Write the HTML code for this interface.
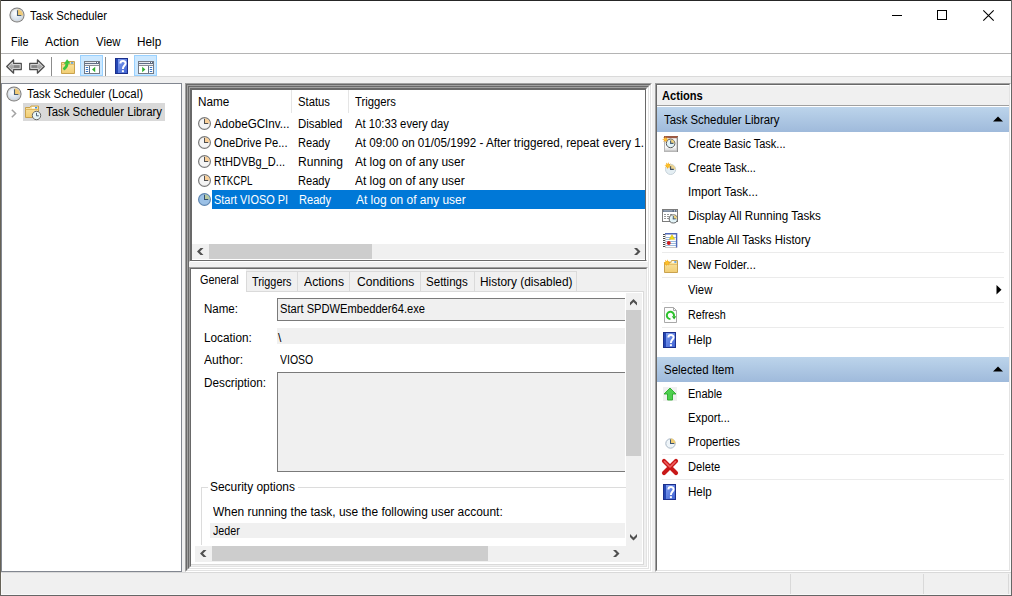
<!DOCTYPE html>
<html><head><meta charset="utf-8">
<style>
*{box-sizing:border-box;margin:0;padding:0}
html,body{width:1012px;height:596px;overflow:hidden;background:#fff}
body{position:relative;font-family:"Liberation Sans",sans-serif;font-size:12px;color:#000;line-height:14px}
.a{position:absolute}
.t{position:absolute;white-space:nowrap;line-height:14px;transform-origin:0 0}
.sk{border-style:solid;border-width:1px;border-color:#a0a0a0 #fff #fff #a0a0a0}
.sk2{border-style:solid;border-width:1px;border-color:#696969 #e3e3e3 #e3e3e3 #696969}
svg{position:absolute;overflow:visible}
</style></head><body>
<svg width="0" height="0" style="position:absolute">
<defs>
 <radialGradient id="face" cx="40%" cy="35%" r="70%"><stop offset="0" stop-color="#ffffff"/><stop offset="1" stop-color="#c9d8e8"/></radialGradient>
 <linearGradient id="hdr" x1="0" y1="0" x2="0" y2="1"><stop offset="0" stop-color="#bcd3ea"/><stop offset="1" stop-color="#9fbadb"/></linearGradient>
 <linearGradient id="fold" x1="0" y1="0" x2="0" y2="1"><stop offset="0" stop-color="#fbe6a6"/><stop offset="1" stop-color="#f1cd72"/></linearGradient>
 <linearGradient id="arrowg" x1="0" y1="0" x2="0" y2="1"><stop offset="0" stop-color="#c8c8c8"/><stop offset="1" stop-color="#8a8a8a"/></linearGradient>
 <linearGradient id="helpg" x1="0" y1="0" x2="1" y2="1"><stop offset="0" stop-color="#86a4f2"/><stop offset="1" stop-color="#3e62d2"/></linearGradient>
 <g id="clock16">
  <circle cx="8" cy="8" r="7.6" fill="#7c7c7c"/>
  <circle cx="8" cy="8" r="6.6" fill="#d6d6d6"/>
  <circle cx="8" cy="8" r="5.8" fill="url(#face)"/>
  <path d="M8.5 8.5 L8.5 2.3 A6.1 6.1 0 0 1 14.1 8.5 Z" fill="#f0cb78"/>
  <path d="M8.5 3.2 V9 M8 8.5 H12.3" fill="none" stroke="#4a5f74" stroke-width="1.1"/>
 </g>
 <g id="clock13">
  <circle cx="6.5" cy="6.5" r="5.9" fill="#f4f4f4" stroke="#7a7a7a" stroke-width="1.2"/>
  <path d="M6.5 6.5 L6.5 1.2 A5.3 5.3 0 0 1 11.8 6.5 Z" fill="#f9cf98"/>
  <path d="M6.5 1.8 V6.9 M6 6.5 H10.2" fill="none" stroke="#505050" stroke-width="1"/>
 </g>
 <g id="clock13s">
  <circle cx="6.5" cy="6.5" r="5.9" fill="#9cc1e6" stroke="#5f86b0" stroke-width="1.2"/>
  <path d="M6.5 6.5 L6.5 1.2 A5.3 5.3 0 0 1 11.8 6.5 Z" fill="#b8c9a0"/>
  <path d="M6.5 1.8 V6.9 M6 6.5 H10.2" fill="none" stroke="#33506e" stroke-width="1"/>
 </g>
 <g id="help">
  <rect x="0.5" y="0.5" width="12" height="15" fill="url(#helpg)" stroke="#1b2f8c"/>
  <rect x="1" y="1" width="2" height="14" fill="#2447b4"/>
  <path d="M5.4 5.4 C5.4 2.3 10.6 2.3 10.6 5.2 C10.6 7.5 7.9 7.6 7.9 10.9" fill="none" stroke="#fff" stroke-width="2"/>
  <rect x="6.9" y="12.2" width="2" height="2" fill="#fff"/>
 </g>
 <g id="folder">
  <path d="M0.5 2.5 H5 L6 1 H13.5 V12.5 H0.5 Z" fill="url(#fold)" stroke="#c9a24e"/>
  <rect x="7" y="2" width="5" height="1.5" fill="#fff"/>
  <rect x="10" y="2" width="2" height="1.5" fill="#3a8ee8"/>
  <path d="M0.5 4.5 H13.5" stroke="#e0b860"/>
 </g>
 <g id="pane">
  <rect x="0.5" y="0.5" width="15" height="12" fill="#fff" stroke="#737984"/>
  <path d="M1 1.5 H11" stroke="#e4e8ee"/>
  <path d="M12 1.5 H13 M14 1.5 H15" stroke="#5a6a84"/>
  <path d="M1 2.5 H15" stroke="#5f6d85"/>
  <path d="M1 3.5 H15" stroke="#eceef2"/>
  <path d="M1 4.5 H15" stroke="#8a8f98"/>
 </g>
</defs>
</svg>

<!-- window border -->
<div class="a" style="left:0;top:0;width:1012px;height:1px;background:#262626"></div>
<div class="a" style="left:0;top:0;width:1px;height:596px;background:#666257"></div>
<div class="a" style="left:1011px;top:0;width:1px;height:596px;background:#666"></div>


<!-- title bar -->
<svg style="left:9px;top:7px" width="16" height="16"><use href="#clock16"/></svg>
<div class="a" style="left:892px;top:15px;width:10px;height:1px;background:#000"></div>
<div class="a" style="left:937px;top:10px;width:10px;height:10px;border:1px solid #000"></div>
<svg style="left:983px;top:10px" width="11" height="11"><path d="M0.3 0.3 L10.7 10.7 M10.7 0.3 L0.3 10.7" stroke="#000" stroke-width="1.1"/></svg>

<!-- menu separator -->
<div class="a" style="left:1px;top:53px;width:1010px;height:1px;background:#b4b4b4"></div>

<!-- toolbar -->
<svg style="left:6px;top:59px" width="16" height="15"><path d="M0.7 7.5 L7.6 0.8 V4.4 H15.3 V10.6 H7.6 V14.2 Z" fill="url(#arrowg)" stroke="#4d4d4d" stroke-width="1.2" stroke-linejoin="round"/>
 <path d="M2.3 7.5 L6.6 3.3 V5.5 H14.2 V9.5 H6.6 V11.7 Z" fill="none" stroke="#e4e4e4" stroke-width="0.7"/>
 <path d="M8 6.2 H13.5 V8.8 H8 Z" fill="#6a6a6a" opacity="0.55"/></svg>
<svg style="left:29px;top:59px" width="16" height="15"><path d="M15.3 7.5 L8.4 0.8 V4.4 H0.7 V10.6 H8.4 V14.2 Z" fill="url(#arrowg)" stroke="#4d4d4d" stroke-width="1.2" stroke-linejoin="round"/>
 <path d="M13.7 7.5 L9.4 3.3 V5.5 H1.8 V9.5 H9.4 V11.7 Z" fill="none" stroke="#e4e4e4" stroke-width="0.7"/>
 <path d="M2.5 6.2 H8 V8.8 H2.5 Z" fill="#6a6a6a" opacity="0.55"/></svg>
<div class="a" style="left:51px;top:57px;width:1px;height:19px;background:#8c8c8c"></div>
<svg style="left:61px;top:59px" width="15" height="16">
 <path d="M0.5 3.5 H5.5 L6.5 2.5 H13.5 V14.5 H0.5 Z" fill="url(#fold)" stroke="#c9a24e"/>
 <path d="M1 5.5 H13" stroke="#e6c06a"/>
 <rect x="10" y="3.3" width="2.4" height="1.3" fill="#3a8ee8"/>
 <path d="M2.4 10.4 C4.7 9.2 6 7.3 6.1 4.3" fill="none" stroke="#3cc43c" stroke-width="2.7"/>
 <path d="M2.9 5 L6.1 0.3 L9.5 4.6 Z" fill="#3cc43c"/>
</svg>
<div class="a" style="left:80px;top:55px;width:23px;height:21px;background:#cce8ff;border:1px solid #99d1ff"></div>
<svg style="left:84px;top:61px" width="16" height="13"><use href="#pane"/>
 <path d="M5.5 5 V12" stroke="#5f6d85"/>
 <path d="M1.8 6.5 H4.2 M1.8 8.5 H4.2 M1.8 10.5 H4.2" stroke="#3a78c8"/>
 <path d="M8 8.5 L11.2 5.8 V11.2 Z" fill="#2fae2f"/></svg>
<div class="a" style="left:105px;top:57px;width:1px;height:19px;background:#8c8c8c"></div>
<svg style="left:115px;top:58px" width="13" height="16"><use href="#help"/></svg>
<div class="a" style="left:134px;top:55px;width:23px;height:21px;background:#cce8ff;border:1px solid #99d1ff"></div>
<svg style="left:138px;top:61px" width="16" height="13"><use href="#pane"/>
 <path d="M10.5 5 V12" stroke="#5f6d85"/>
 <path d="M11.8 6.5 H14.2 M11.8 8.5 H14.2 M11.8 10.5 H14.2" stroke="#3a78c8"/>
 <path d="M4.2 5.8 L7.4 8.5 L4.2 11.2 Z" fill="#2fae2f"/></svg>

<!-- grey band below toolbar -->
<div class="a" style="left:1px;top:76px;width:1010px;height:1px;background:#dadada"></div>
<div class="a" style="left:1px;top:77px;width:1010px;height:518px;background:#f0f0f0"></div>

<!-- left pane -->
<div class="a" style="left:1px;top:83px;width:181px;height:489px;background:#fff;border:1px solid #828790"></div>
<svg style="left:6px;top:86px" width="16" height="16"><use href="#clock16"/></svg>
<svg style="left:11px;top:109px" width="6" height="9"><path d="M0.8 0.8 L4.6 4.5 L0.8 8.2" fill="none" stroke="#a2a2a2" stroke-width="1.5"/></svg>
<div class="a" style="left:23px;top:103px;width:142px;height:18px;background:#d9d9d9"></div>
<svg style="left:25px;top:105px" width="16" height="16"><use href="#folder"/>
 <circle cx="11.5" cy="10.5" r="4.2" fill="#e8f6f8" stroke="#666" stroke-width="1"/>
 <path d="M11.5 7.8 V10.8 H13.8" fill="none" stroke="#4e6378" stroke-width="1"/></svg>

<!-- middle frame -->
<div class="a sk" style="left:185px;top:83px;width:467px;height:489px">
 <div class="a sk2" style="left:0;top:0;right:0;bottom:0">
  <div class="a sk" style="left:0;top:0;right:0;bottom:0">
   <div class="a sk2" style="left:0;top:0;right:0;bottom:0"></div>
  </div>
 </div>
</div>
<!-- list view -->
<div class="a sk" style="left:189px;top:87px;width:459px;height:175px;background:#fff">
 <div class="a" style="left:0;top:0;right:0;bottom:0;border-style:solid;border-width:1px;border-color:#696969 #fff #696969 #696969">
  <div class="a" style="left:0;top:0;right:0;bottom:0;border-style:solid;border-width:1px 1px 0 1px;border-color:#696969"></div>
 </div>
</div>
<div class="a" style="left:291px;top:90px;width:1px;height:23px;background:#e5e5e5"></div>
<div class="a" style="left:348px;top:90px;width:1px;height:23px;background:#e5e5e5"></div>
<div class="a" style="left:212px;top:190px;width:433px;height:19px;background:#0078d7"></div>
<svg style="left:198px;top:117px" width="13" height="13"><use href="#clock13"/></svg>
<svg style="left:198px;top:136px" width="13" height="13"><use href="#clock13"/></svg>
<svg style="left:198px;top:155px" width="13" height="13"><use href="#clock13"/></svg>
<svg style="left:198px;top:174px" width="13" height="13"><use href="#clock13"/></svg>
<svg style="left:198px;top:193px" width="13" height="13"><use href="#clock13s"/></svg>
<!-- list h scrollbar -->
<div class="a" style="left:192px;top:244px;width:453px;height:15px;background:#f0f0f0"></div>
<div class="a" style="left:209px;top:244px;width:163px;height:15px;background:#cdcdcd"></div>
<svg style="left:197px;top:248px" width="7" height="7"><path d="M3.5 0 H6.5 L3 3.5 L6.5 7 H3.5 L0 3.5 Z" fill="#505050"/></svg>
<svg style="left:634px;top:248px" width="7" height="7"><path d="M3 0 H0 L3.5 3.5 L0 7 H3 L6.5 3.5 Z" fill="#505050"/></svg>

<!-- details pane -->
<div class="a sk" style="left:189px;top:267px;width:459px;height:301px;background:#f0f0f0">
 <div class="a sk2" style="left:0;top:0;right:0;bottom:0"></div>
</div>
<!-- tab page -->
<div class="a" style="left:191px;top:291px;width:453px;height:274px;background:#fff;border-style:solid;border-width:1px 1px 1px 0;border-color:#dadada"></div>
<!-- tabs -->
<div class="a" style="left:191px;top:269px;width:55px;height:23px;background:#fff"></div>
<div class="a" style="left:246px;top:271px;width:331px;height:21px;background:#f0f0f0;border:1px solid #dadada"></div>
<div class="a" style="left:297px;top:271px;width:1px;height:20px;background:#dadada"></div>
<div class="a" style="left:349px;top:271px;width:1px;height:20px;background:#dadada"></div>
<div class="a" style="left:420px;top:271px;width:1px;height:20px;background:#dadada"></div>
<div class="a" style="left:474px;top:271px;width:1px;height:20px;background:#dadada"></div>
<!-- details content -->
<div class="a" style="left:277px;top:298px;width:348px;height:23px;background:#f0f0f0;border:1px solid #7a7a7a;border-right:0"></div>
<div class="a" style="left:277px;top:328px;width:348px;height:16px;background:#f0f0f0"></div>
<div class="a" style="left:277px;top:372px;width:348px;height:100px;background:#f0f0f0;border:1px solid #7a7a7a;border-right:0"></div>
<div class="a" style="left:201px;top:487px;width:425px;height:58px;border-style:solid;border-color:#dcdcdc;border-width:1px 0 0 1px"></div>
<div class="a" style="left:208px;top:482px;width:90px;height:10px;background:#fff"></div>
<div class="a" style="left:210px;top:523px;width:415px;height:15px;background:#f0f0f0"></div>
<!-- details scrollbars -->
<div class="a" style="left:626px;top:293px;width:16px;height:269px;background:#f0f0f0"></div>
<div class="a" style="left:626px;top:310px;width:15px;height:146px;background:#cdcdcd"></div>
<svg style="left:630px;top:299px" width="7" height="7"><path d="M3.5 0 L7 3.5 V6.5 L3.5 3 L0 6.5 V3.5 Z" fill="#505050"/></svg>
<svg style="left:630px;top:534px" width="7" height="7"><path d="M0 0 L3.5 3.5 L7 0 V3 L3.5 6.5 L0 3 Z" fill="#505050"/></svg>
<div class="a" style="left:195px;top:546px;width:431px;height:16px;background:#f0f0f0"></div>
<div class="a" style="left:212px;top:546px;width:276px;height:15px;background:#cdcdcd"></div>
<svg style="left:200px;top:550px" width="7" height="7"><path d="M3.5 0 H6.5 L3 3.5 L6.5 7 H3.5 L0 3.5 Z" fill="#505050"/></svg>
<svg style="left:613px;top:550px" width="7" height="7"><path d="M3 0 H0 L3.5 3.5 L0 7 H3 L6.5 3.5 Z" fill="#505050"/></svg>

<!-- right pane -->
<div class="a sk" style="left:655px;top:83px;width:356px;height:489px;background:#fff">
 <div class="a sk2" style="left:0;top:0;right:0;bottom:0"></div>
</div>
<div class="a" style="left:657px;top:86px;width:352px;height:19px;background:#f0f0f0"></div>
<div class="a" style="left:657px;top:105px;width:352px;height:1px;background:#a0a0a0"></div>
<div class="a" style="left:657px;top:107px;width:352px;height:25px;background:linear-gradient(#bcd4eb,#9fbadb)"></div>
<svg style="left:993px;top:116px" width="10" height="6"><path d="M0 5.5 L5 0.5 L10 5.5 Z" fill="#000"/></svg>
<div class="a" style="left:662px;top:252px;width:342px;height:1px;background:#ebebeb"></div>
<div class="a" style="left:662px;top:277px;width:342px;height:1px;background:#ebebeb"></div>
<div class="a" style="left:662px;top:302px;width:342px;height:1px;background:#ebebeb"></div>
<div class="a" style="left:662px;top:327px;width:342px;height:1px;background:#ebebeb"></div>
<svg style="left:996px;top:285px" width="6" height="10"><path d="M0.5 0 L5.5 4.7 L0.5 9.4 Z" fill="#000"/></svg>
<div class="a" style="left:657px;top:357px;width:352px;height:25px;background:linear-gradient(#bcd4eb,#9fbadb)"></div>
<svg style="left:993px;top:366px" width="10" height="6"><path d="M0 5.5 L5 0.5 L10 5.5 Z" fill="#000"/></svg>
<div class="a" style="left:662px;top:454px;width:342px;height:1px;background:#ebebeb"></div>
<div class="a" style="left:662px;top:479px;width:342px;height:1px;background:#ebebeb"></div>

<!-- action icons -->
<svg style="left:662px;top:136px" width="16" height="16">
 <rect x="2.5" y="0.5" width="12.5" height="15" fill="#f7f7f7" stroke="#b4b4b4"/>
 <rect x="2" y="0" width="14" height="2.2" fill="#9c5a44"/>
 <rect x="15" y="1" width="1" height="15" fill="#8e8e8e"/>
 <rect x="3" y="12.6" width="12" height="1" fill="#d4d4d4"/>
 <rect x="3" y="14.2" width="12" height="1" fill="#bdbdbd"/>
 <circle cx="8.6" cy="7.4" r="4.3" fill="#e2f3f7" stroke="#5a5a5a" stroke-width="1"/>
 <path d="M8.6 7.4 V3.6 A3.8 3.8 0 0 1 12.4 7.4 Z" fill="#efd27e"/>
 <path d="M8.6 4.4 V7.6 M8.1 7.4 H11.4" stroke="#46607a" stroke-width="1.1"/>
 <path d="M3.40 -0.10 L3.90 2.30 L5.95 0.95 L4.60 3.00 L7.00 3.50 L4.60 4.00 L5.95 6.05 L3.90 4.70 L3.40 7.10 L2.90 4.70 L0.85 6.05 L2.20 4.00 L-0.20 3.50 L2.20 3.00 L0.85 0.95 L2.90 2.30 Z" fill="#f4a21c"/>
 <circle cx="3.4" cy="3.5" r="1.3" fill="#fcc43c"/>
</svg>
<svg style="left:664px;top:161px" width="14" height="15">
 <circle cx="6.6" cy="8.4" r="5.1" fill="#e4eef3" stroke="#c2ced6" stroke-width="0.9"/>
 <path d="M6.6 8.4 V3.5 A4.9 4.9 0 0 1 11.5 8.4 Z" fill="#eed592"/>
 <path d="M6.6 5 V8.7 M6.1 8.4 H9.8" stroke="#3e5066" stroke-width="1.1"/>
 <path d="M4.62 1.07 L4.79 3.27 L6.90 2.61 L5.47 4.29 L7.43 5.32 L5.23 5.49 L5.89 7.60 L4.21 6.17 L3.18 8.13 L3.01 5.93 L0.90 6.59 L2.33 4.91 L0.37 3.88 L2.57 3.71 L1.91 1.60 L3.59 3.03 Z" fill="#f6a80e"/>
 <circle cx="3.9" cy="4.6" r="1.7" fill="#fbc02a"/>
</svg>
<svg style="left:662px;top:209px" width="16" height="14">
 <rect x="0.5" y="0.5" width="15" height="12" fill="#fff" stroke="#7c7c7c"/>
 <rect x="1" y="1" width="14" height="2" fill="#5f6f86"/>
 <path d="M1.5 1.9 H10.5" stroke="#c8d0dc" stroke-width="0.8"/>
 <rect x="12" y="1.4" width="1" height="1" fill="#fff"/><rect x="14" y="1.4" width="0.8" height="1" fill="#fff"/>
 <path d="M2 5.5 H4 M5 5.5 H7 M8 5.5 H10 M2 7.5 H4 M5 7.5 H7 M2 9.5 H4 M5 9.5 H7" stroke="#8c8c8c" stroke-width="0.9"/>
 <circle cx="11.3" cy="9.9" r="4.1" fill="#e2f3f7" stroke="#5a5a5a" stroke-width="0.9"/>
 <path d="M11.3 9.9 V6.3 A3.6 3.6 0 0 1 14.9 9.9 Z" fill="#efd27e"/>
 <path d="M11.3 7 V10.1 M10.8 9.9 H13.8" stroke="#46607a" stroke-width="1"/>
</svg>
<svg style="left:662px;top:233px" width="16" height="15">
 <rect x="3.5" y="0.5" width="11" height="14" fill="#fff" stroke="#c8c8c8"/>
 <path d="M3 0.7 H14.6 V14.6" fill="none" stroke="#5068b8" stroke-width="1.4"/>
 <path d="M4 4.5 H14 M4 6.5 H8.5 M4 8.5 H14 M4 10.5 H14 M4 12.5 H14" stroke="#8eb0d8" stroke-width="0.9"/>
 <path d="M1 1.5 H3 M1 3.5 H3 M1 5.5 H3 M1 7.5 H3 M1 9.5 H3 M1 11.5 H3 M1 13.5 H3" stroke="#333" stroke-width="0.9"/>
 <path d="M10 1.7 L12.7 6.3 H7.3 Z" fill="#f2dc18" stroke="#c8b008" stroke-width="0.5"/>
 <circle cx="6.8" cy="10" r="1.9" fill="#d01c1c"/>
</svg>
<svg style="left:664px;top:260px" width="14" height="13">
 <path d="M0.5 2.5 H6.5 L7.5 0.5 H13.5 V12.5 H0.5 Z" fill="url(#fold)" stroke="#c9a24e"/>
 <path d="M1 4.5 H13" stroke="#e6c06a"/>
 <rect x="8" y="1.3" width="3" height="1.4" fill="#fff"/><rect x="10.3" y="1.3" width="2" height="1.4" fill="#3a8ee8"/>
 <path d="M3.72 -0.73 L3.89 1.47 L6.00 0.81 L4.57 2.49 L6.53 3.52 L4.33 3.69 L4.99 5.80 L3.31 4.37 L2.28 6.33 L2.11 4.13 L-0.00 4.79 L1.43 3.11 L-0.53 2.08 L1.67 1.91 L1.01 -0.20 L2.69 1.23 Z" fill="#f6a80e"/>
 <circle cx="3" cy="2.8" r="1.7" fill="#fbc02a"/>
</svg>
<svg style="left:664px;top:307px" width="13" height="16">
 <path d="M0.5 0.5 H9.5 L12.5 3.5 V15.5 H0.5 Z" fill="#fdfdfd" stroke="#a8a8a8"/>
 <path d="M9.5 0.5 V3.5 H12.5" fill="none" stroke="#a8a8a8"/>
 <path d="M6.4 12 A3.6 3.6 0 1 1 9.9 9.3" fill="none" stroke="#2cc22c" stroke-width="2"/>
 <path d="M7.8 9.2 L12.3 9.2 L10.1 12.6 Z" fill="#22b022"/>
</svg>
<svg style="left:663px;top:332px" width="13" height="16"><use href="#help"/></svg>
<svg style="left:663px;top:387px" width="14" height="14">
 <rect x="0" y="0" width="14" height="14" fill="#f0f0f0"/>
 <path d="M7 1 L13 7 H9.5 V13 H4.5 V7 H1 Z" fill="#4ed04e" stroke="#2ea82e" stroke-width="0.9" stroke-linejoin="round"/>
</svg>
<svg style="left:665px;top:438px" width="11" height="11">
 <circle cx="5.5" cy="5.5" r="4.7" fill="#eef4f8" stroke="#a9b7c6" stroke-width="1"/>
 <path d="M5.5 5.5 V0.4 A5.1 5.1 0 0 1 10.6 5.5 Z" fill="#f0cd74"/>
 <path d="M5.5 1.4 V6 M5 5.5 H9.3" stroke="#3f5670" stroke-width="1"/>
</svg>
<svg style="left:662px;top:459px" width="16" height="16">
 <path d="M2 2 L14 14 M14 2 L2 14" stroke="#c81818" stroke-width="4.2" stroke-linecap="round"/>
 <path d="M2.5 2.5 L8 8 M13.5 2.5 L8 8" stroke="#f06060" stroke-width="1.6" stroke-linecap="round"/>
</svg>
<svg style="left:663px;top:484px" width="13" height="16"><use href="#help"/></svg>

<!-- status bar -->
<div class="a" style="left:1px;top:572px;width:1010px;height:1px;background:#d9d9d9"></div>
<div class="a" style="left:790px;top:574px;width:1px;height:20px;background:#d9d9d9"></div>
<div class="a" style="left:923px;top:574px;width:1px;height:20px;background:#d9d9d9"></div>
<div class="a" style="left:1008px;top:574px;width:1px;height:20px;background:#d9d9d9"></div>

<div class="a" style="left:1px;top:594px;width:1010px;height:1px;background:#f8f8f8"></div>
<div class="a" style="left:1px;top:573px;width:1px;height:21px;background:#f8f8f8"></div>
<div class="a" style="left:0;top:595px;width:1012px;height:1px;background:#666"></div>
<div class="t" style="left:30px;top:9px;transform:scaleX(0.9385);">Task Scheduler</div>
<div class="t" style="left:11px;top:35px;transform:scaleX(0.9047);">File</div>
<div class="t" style="left:45px;top:35px;transform:scaleX(1.0192);">Action</div>
<div class="t" style="left:96px;top:35px;transform:scaleX(0.9497);">View</div>
<div class="t" style="left:137px;top:35px;transform:scaleX(0.9803);">Help</div>
<div class="t" style="left:27px;top:87px;transform:scaleX(0.9503);">Task Scheduler (Local)</div>
<div class="t" style="left:46px;top:105px;transform:scaleX(0.9503);">Task Scheduler Library</div>
<div class="t" style="left:198px;top:95px;transform:scaleX(0.9776);">Name</div>
<div class="t" style="left:298px;top:95px;transform:scaleX(0.9403);">Status</div>
<div class="t" style="left:355px;top:95px;transform:scaleX(0.9408);">Triggers</div>
<div class="t" style="left:214px;top:117px;transform:scaleX(0.9701);">AdobeGCInv...</div>
<div class="t" style="left:298px;top:117px;transform:scaleX(0.9507);">Disabled</div>
<div class="t" style="left:355px;top:117px;transform:scaleX(0.9394);">At 10:33 every day</div>
<div class="t" style="left:214px;top:136px;transform:scaleX(0.9352);">OneDrive Pe...</div>
<div class="t" style="left:298px;top:136px;transform:scaleX(0.9225);">Ready</div>
<div class="t" style="left:355px;top:136px;transform:scaleX(0.9713);">At 09:00 on 01/05/1992 - After triggered, repeat every 1.</div>
<div class="t" style="left:214px;top:155px;transform:scaleX(0.9178);">RtHDVBg_D...</div>
<div class="t" style="left:298px;top:155px;transform:scaleX(1.0066);">Running</div>
<div class="t" style="left:355px;top:155px;transform:scaleX(0.9966);">At log on of any user</div>
<div class="t" style="left:214px;top:174px;transform:scaleX(0.8146);">RTKCPL</div>
<div class="t" style="left:298px;top:174px;transform:scaleX(0.9225);">Ready</div>
<div class="t" style="left:355px;top:174px;transform:scaleX(0.9966);">At log on of any user</div>
<div class="t" style="left:214px;top:193px;color:#fff;transform:scaleX(0.9095);">Start VIOSO PI</div>
<div class="t" style="left:299px;top:193px;color:#fff;transform:scaleX(0.9225);">Ready</div>
<div class="t" style="left:356px;top:193px;color:#fff;transform:scaleX(0.9966);">At log on of any user</div>
<div class="t" style="left:200px;top:273px;transform:scaleX(0.9039);">General</div>
<div class="t" style="left:252px;top:275px;transform:scaleX(0.9064);">Triggers</div>
<div class="t" style="left:304px;top:275px;transform:scaleX(1.0163);">Actions</div>
<div class="t" style="left:357px;top:275px;transform:scaleX(1.0105);">Conditions</div>
<div class="t" style="left:426px;top:275px;transform:scaleX(0.9640);">Settings</div>
<div class="t" style="left:480px;top:275px;transform:scaleX(0.9906);">History (disabled)</div>
<div class="t" style="left:204px;top:302px;transform:scaleX(0.9620);">Name:</div>
<div class="t" style="left:280px;top:302px;transform:scaleX(0.9290);">Start SPDWEmbedder64.exe</div>
<div class="t" style="left:204px;top:331px;transform:scaleX(0.9815);">Location:</div>
<div class="t" style="left:278px;top:331px;">\</div>
<div class="t" style="left:204px;top:353px;transform:scaleX(1.0077);">Author:</div>
<div class="t" style="left:280px;top:353px;transform:scaleX(0.8733);">VIOSO</div>
<div class="t" style="left:204px;top:376px;transform:scaleX(0.9785);">Description:</div>
<div class="t" style="left:210px;top:480px;transform:scaleX(0.9954);">Security options</div>
<div class="t" style="left:213px;top:505px;transform:scaleX(0.9938);">When running the task, use the following user account:</div>
<div class="t" style="left:213px;top:524px;transform:scaleX(0.8924);">Jeder</div>
<div class="t" style="left:662px;top:89px;font-weight:bold;transform:scaleX(0.9269);">Actions</div>
<div class="t" style="left:664px;top:113px;transform:scaleX(0.9462);">Task Scheduler Library</div>
<div class="t" style="left:688px;top:137px;transform:scaleX(0.9155);">Create Basic Task...</div>
<div class="t" style="left:688px;top:161px;transform:scaleX(0.9199);">Create Task...</div>
<div class="t" style="left:688px;top:185px;transform:scaleX(0.9734);">Import Task...</div>
<div class="t" style="left:688px;top:209px;transform:scaleX(0.9687);">Display All Running Tasks</div>
<div class="t" style="left:688px;top:233px;transform:scaleX(0.9590);">Enable All Tasks History</div>
<div class="t" style="left:688px;top:258px;transform:scaleX(0.9604);">New Folder...</div>
<div class="t" style="left:688px;top:283px;transform:scaleX(0.9420);">View</div>
<div class="t" style="left:688px;top:308px;transform:scaleX(0.8970);">Refresh</div>
<div class="t" style="left:688px;top:333px;transform:scaleX(0.9641);">Help</div>
<div class="t" style="left:664px;top:363px;transform:scaleX(0.9540);">Selected Item</div>
<div class="t" style="left:688px;top:387px;transform:scaleX(0.9151);">Enable</div>
<div class="t" style="left:688px;top:411px;transform:scaleX(0.9376);">Export...</div>
<div class="t" style="left:688px;top:435px;transform:scaleX(0.9506);">Properties</div>
<div class="t" style="left:688px;top:460px;transform:scaleX(0.9283);">Delete</div>
<div class="t" style="left:688px;top:485px;transform:scaleX(0.9641);">Help</div>
</body></html>
